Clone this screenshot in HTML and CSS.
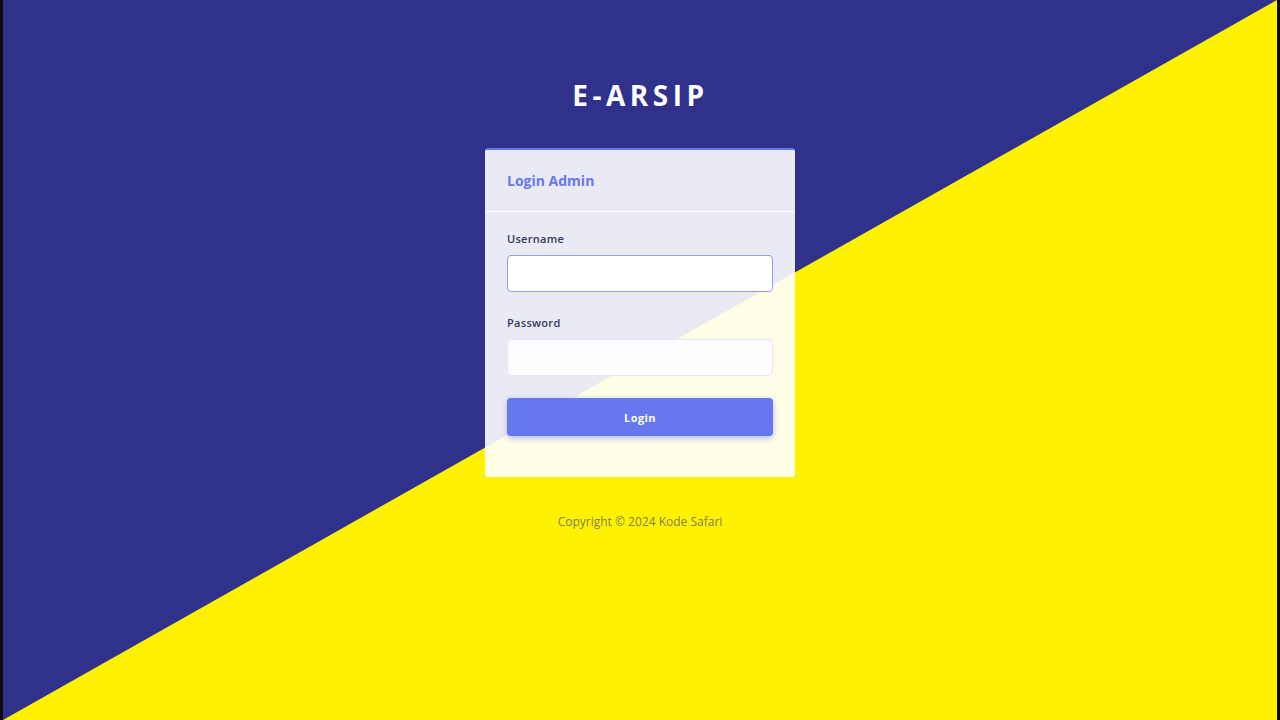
FILE: index.html
```html
<!DOCTYPE html>
<html lang="id">
<head>
<meta charset="utf-8">
<title>E-ARSIP Login</title>
<link rel="stylesheet" href="styles.css">
</head>
<body>
<div class="page">
  <div class="wrap">
    <h1 class="brand">E-ARSIP</h1>
    <div class="card">
      <div class="card-header">
        <h4>Login Admin</h4>
      </div>
      <form class="card-body">
        <div class="group">
          <label for="u">Username</label>
          <input id="u" class="input focus" type="text">
        </div>
        <div class="group">
          <label for="p">Password</label>
          <input id="p" class="input" type="password">
        </div>
        <button type="button" class="btn">Login</button>
      </form>
    </div>
    <div class="footer">Copyright © 2024 Kode Safari</div>
  </div>
</div>
</body>
</html>
```
FILE: styles.css
```css
html, body {
  margin: 0;
  padding: 0;
  background: #0b0b0f;
  height: 720px;
  overflow: hidden;
}
body {
  font-family: "Open Sans", "Noto Sans", sans-serif;
}
.page {
  margin: 0 3px;
  height: 720px;
  background: linear-gradient(to top left, #fff200 calc(50% - 0.5px), #2f318b calc(50% + 0.5px));
}
.wrap {
  display: flex;
  flex-direction: column;
  align-items: center;
  padding-top: 78px;
}
.brand {
  margin: 0;
  color: #fff;
  font-size: 28px;
  font-weight: 700;
  letter-spacing: 4.5px;
  padding-left: 1px;
  line-height: 34px;
  height: 34px;
}
.card {
  margin-top: 36px;
  width: 310px;
  background: rgba(255, 255, 255, 0.9);
  border-top: 2px solid #6777ef;
  border-radius: 3px;
  box-sizing: border-box;
}
.card-header {
  height: 61px;
  display: flex;
  align-items: center;
  padding: 0 22px;
  border-bottom: 1px solid rgba(255,255,255,0.9);
}
.card-header h4 {
  margin: 0;
  font-size: 14px;
  font-weight: 700;
  color: #6777ef;
}
.card-body {
  display: flex;
  flex-direction: column;
  padding: 19px 22px 41px;
}
.group {
  display: flex;
  flex-direction: column;
  margin-bottom: 23px;
}
.group:last-of-type {
  margin-bottom: 22px;
}
.group label {
  font-size: 11px;
  font-weight: 600;
  color: #34395e;
  letter-spacing: 0.3px;
  line-height: 16px;
  margin-bottom: 8px;
}
.input {
  height: 37px;
  box-sizing: border-box;
  border: 1px solid #e4e6fc;
  background: #fdfdff;
  border-radius: 4px;
  outline: none;
}
.input.focus {
  border-color: #95a0f4;
  background: #fff;
}
.btn {
  margin-top: 0;
  height: 38px;
  border: none;
  border-radius: 4px;
  background: #6777ef;
  color: #fff;
  font-family: inherit;
  font-size: 11px;
  font-weight: 700;
  letter-spacing: 0.4px;
  box-shadow: 0 2px 6px #acb5f6;
}
.footer {
  margin-top: 36px;
  font-size: 12px;
  color: #7f7e55;
}
```
